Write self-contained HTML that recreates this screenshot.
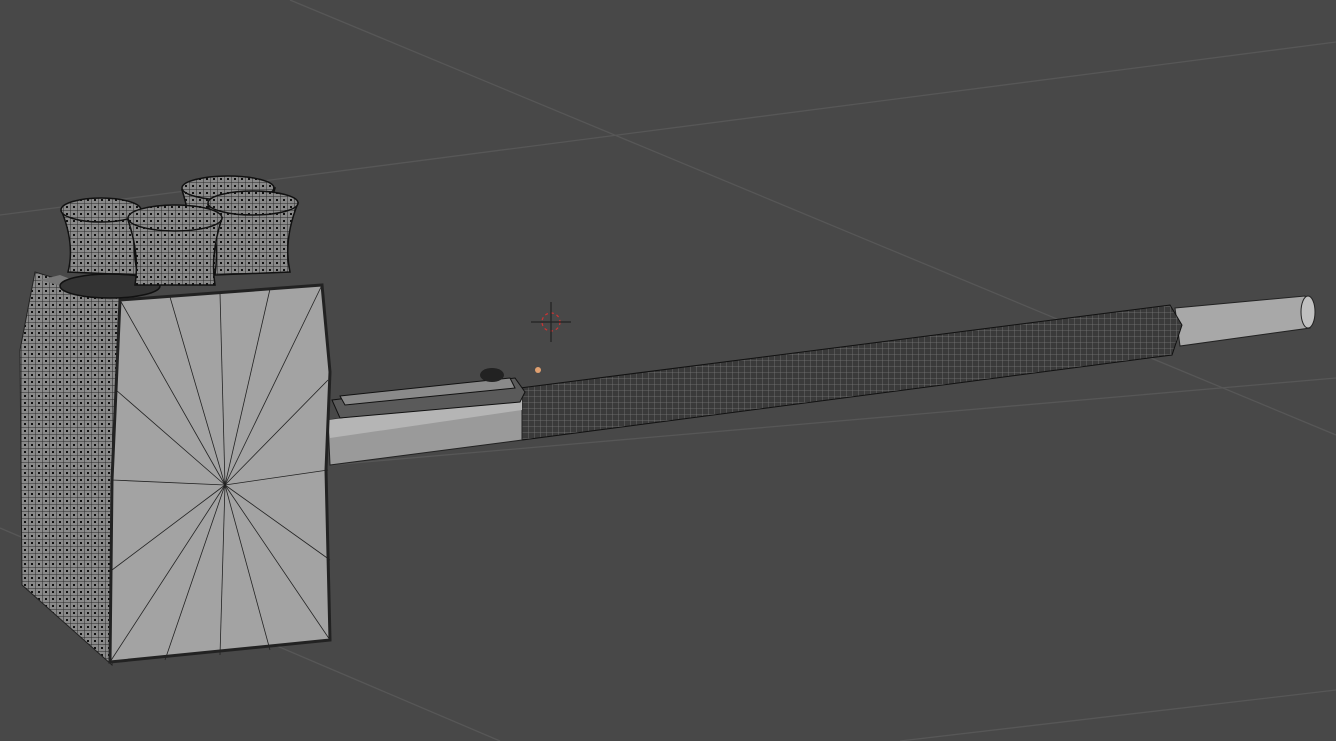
<!DOCTYPE html>
<html><head><meta charset="utf-8"><style>
html,body{margin:0;padding:0;background:#484848;width:1336px;height:741px;overflow:hidden}
</style></head><body>
<svg width="1336" height="741" viewBox="0 0 1336 741" xmlns="http://www.w3.org/2000/svg">
<defs>
<pattern id="mesh" width="7" height="7" patternUnits="userSpaceOnUse">
<rect width="7" height="7" fill="#8a8a8a"/>
<path d="M0 0H7M0 0V7" stroke="#2a2a2a" stroke-width="1"/>
<rect x="3" y="3" width="2" height="2" fill="#111"/>
</pattern>
<pattern id="grip" width="6" height="6" patternUnits="userSpaceOnUse">
<rect width="6" height="6" fill="#3a3a3a"/>
<path d="M0 0H6M0 0V6" stroke="#777" stroke-width="0.8"/>
</pattern>
</defs>
<rect width="1336" height="741" fill="#484848"/>
<g stroke="#575757" stroke-width="1.3" fill="none">
<line x1="290" y1="0" x2="1336" y2="435"/>
<line x1="0" y1="215" x2="1336" y2="42"/>
<line x1="330" y1="465" x2="1336" y2="378"/>
<line x1="0" y1="528" x2="500" y2="741"/>
<line x1="900" y1="741" x2="1336" y2="690"/>
</g>
<!-- handle rear end -->
<polygon points="1175,308 1305,296 1314,313 1310,328 1180,346" fill="#a8a8a8" stroke="#222"/>
<ellipse cx="1308" cy="312" rx="7" ry="16" fill="#c0c0c0" stroke="#222"/>
<!-- grip -->
<polygon points="520,388 1170,305 1182,325 1172,355 522,440" fill="url(#grip)" stroke="#111"/>
<!-- shaft -->
<polygon points="328,420 522,395 522,440 330,465" fill="#9a9a9a" stroke="#222"/>
<polygon points="328,420 522,395 522,410 330,438" fill="#b5b5b5"/>
<!-- top detail -->
<polygon points="332,400 515,378 525,392 520,402 340,418" fill="#5a5a5a" stroke="#111"/>
<polygon points="340,396 510,378 515,388 345,405" fill="#8a8a8a" stroke="#111"/>
<ellipse cx="492" cy="375" rx="12" ry="7" fill="#222"/>
<circle cx="538" cy="370" r="3" fill="#e0a070"/>
<!-- 3D cursor -->
<g stroke="#222" stroke-width="1.2" fill="none">
<circle cx="551" cy="322" r="9" stroke="#c33" stroke-dasharray="3 3"/>
<line x1="531" y1="322" x2="571" y2="322"/><line x1="551" y1="302" x2="551" y2="342"/>
</g>
<!-- head left side -->
<polygon points="35,272 120,298 112,665 22,585 20,350" fill="url(#mesh)" stroke="#222"/>
<polygon points="120,298 60,275 40,280 110,300" fill="#777"/>
<!-- head front face -->
<polygon points="120,300 322,285 330,372 326,470 330,640 110,662 112,480" fill="#a3a3a3" stroke="#222" stroke-width="3"/>
<g stroke="#222" stroke-width="0.8">
<line x1="225" y1="485" x2="120" y2="300"/><line x1="225" y1="485" x2="170" y2="297"/>
<line x1="225" y1="485" x2="220" y2="293"/><line x1="225" y1="485" x2="270" y2="289"/>
<line x1="225" y1="485" x2="322" y2="285"/><line x1="225" y1="485" x2="328" y2="380"/>
<line x1="225" y1="485" x2="328" y2="470"/><line x1="225" y1="485" x2="330" y2="560"/>
<line x1="225" y1="485" x2="330" y2="640"/><line x1="225" y1="485" x2="270" y2="650"/>
<line x1="225" y1="485" x2="220" y2="655"/><line x1="225" y1="485" x2="165" y2="660"/>
<line x1="225" y1="485" x2="110" y2="662"/><line x1="225" y1="485" x2="112" y2="570"/>
<line x1="225" y1="485" x2="112" y2="480"/><line x1="225" y1="485" x2="116" y2="390"/>
</g>
<!-- top cylinders -->
<g stroke="#111" stroke-width="1.5">
<ellipse cx="110" cy="286" rx="50" ry="12" fill="#333"/>
<path d="M182,190 Q195,230 188,270 L270,268 Q262,230 275,188 Z" fill="url(#mesh)"/>
<ellipse cx="228" cy="188" rx="46" ry="12" fill="url(#mesh)"/>
<path d="M62,212 Q75,245 68,272 L138,275 Q130,245 140,210 Z" fill="url(#mesh)"/>
<ellipse cx="101" cy="210" rx="40" ry="12" fill="url(#mesh)"/>
<path d="M208,205 Q220,240 215,275 L290,272 Q283,240 298,203 Z" fill="url(#mesh)"/>
<ellipse cx="253" cy="203" rx="45" ry="12" fill="url(#mesh)"/>
<path d="M128,220 Q140,255 135,285 L215,285 Q210,255 222,218 Z" fill="url(#mesh)"/>
<ellipse cx="175" cy="218" rx="47" ry="13" fill="url(#mesh)"/>
</g>
</svg>
</body></html>
